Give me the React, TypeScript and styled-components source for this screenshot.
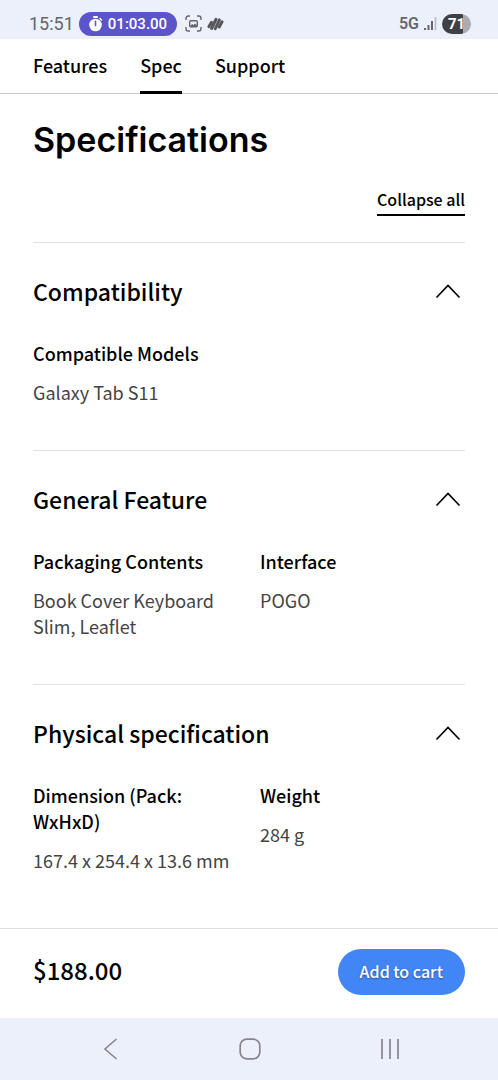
import React, { useState } from "react";
import styled, { createGlobalStyle } from "styled-components";

const GlobalStyle = createGlobalStyle`
  *, *::before, *::after { box-sizing: border-box; }
  body {
    margin: 0;
    background: #fff;
    color: #000;
    font-family: "Noto Sans CJK KR", "Noto Sans", sans-serif;
  }
  button { font-family: inherit; color: inherit; cursor: pointer; }
  h1, h2, dl, dt, dd, p { margin: 0; }
`;

const Page = styled.div`
  display: flex;
  flex-direction: column;
  min-height: 100vh;
`;

const StatusBar = styled.div`
  display: flex;
  align-items: center;
  justify-content: space-between;
  height: 39px;
  padding: 8px 27px 0 29px;
  background: #ebf0fb;
  color: #65666d;
  font-family: Roboto, sans-serif;
`;

const StatusGroup = styled.div<{ $gap: number }>`
  display: flex;
  align-items: center;
  gap: ${(p) => p.$gap}px;
`;

const Clock = styled.span`
  font-size: 18px;
  line-height: 24px;
`;

const TimerPill = styled.span`
  display: flex;
  align-items: center;
  gap: 6px;
  height: 24px;
  margin-right: 3px;
  padding: 0 10px;
  border-radius: 12px;
  background: #5c55c9;
  color: #fff;
  font-size: 15px;
  font-weight: 500;
`;

const Network = styled.span`
  font-size: 16px;
  font-weight: 600;
`;

const Battery = styled.span`
  display: flex;
  align-items: center;
  justify-content: center;
  width: 29px;
  height: 20px;
  border-radius: 10px;
  background: linear-gradient(90deg, #3f4045 71%, #aaacb4 71%);
  color: #fff;
  font-size: 15px;
  font-weight: 700;
`;

const Tabs = styled.nav`
  display: flex;
  gap: 33px;
  height: 55px;
  padding: 0 33px;
  border-bottom: 1px solid #ccc;
`;

const Tab = styled.a<{ $active?: boolean }>`
  height: 55px;
  padding-top: 12px;
  border-bottom: 3px solid ${(p) => (p.$active ? "#000" : "transparent")};
  color: #000;
  font-size: 18px;
  font-weight: 500;
  line-height: 28px;
  text-decoration: none;
`;

const Content = styled.main`
  flex: 1;
  padding: 24px 33px 8px;
`;

const Title = styled.h1`
  font-family: Inter, sans-serif;
  font-size: 34px;
  font-weight: 600;
  line-height: 44px;
`;

const CollapseRow = styled.div`
  display: flex;
  justify-content: flex-end;
  padding: 25px 0 26px;
`;

const CollapseButton = styled.button`
  padding: 0 0 3px;
  border: 0;
  border-bottom: 2px solid #000;
  background: none;
  font-size: 16px;
  font-weight: 500;
  line-height: 24px;
`;

const Section = styled.section`
  padding: 32px 0 45px;
  border-top: 1px solid #e2e2e2;
`;

const SectionHeading = styled.h2`
  font-size: 23px;
  font-weight: 500;
  line-height: 32px;
`;

const SectionToggle = styled.button`
  display: flex;
  align-items: center;
  justify-content: space-between;
  width: 100%;
  padding: 0 4px 0 0;
  border: 0;
  background: none;
  font: inherit;
`;

const SpecList = styled.dl`
  display: grid;
  grid-template-columns: 1fr 1fr;
  column-gap: 22px;
  padding-top: 33px;
`;

const SpecName = styled.dt`
  font-size: 18px;
  font-weight: 500;
  line-height: 26px;
`;

const SpecValue = styled.dd`
  padding-top: 13px;
  color: #444;
  font-size: 18px;
  font-weight: 400;
  line-height: 26px;
`;

const BuyBar = styled.footer`
  display: flex;
  align-items: center;
  justify-content: space-between;
  height: 90px;
  padding: 0 33px 4px;
  border-top: 1px solid #ddd;
`;

const Price = styled.p`
  padding-bottom: 4px;
  font-size: 24px;
  font-weight: 500;
  line-height: 32px;
`;

const CartButton = styled.button`
  height: 46px;
  padding: 0 22px 2px;
  border: 0;
  border-radius: 23px;
  background: #4285f4;
  color: #fff;
  font-size: 16px;
  font-weight: 500;
  line-height: 24px;
  text-shadow: 0 1px 2px rgba(0, 0, 0, 0.35);
`;

const SystemNav = styled.div`
  display: flex;
  align-items: center;
  justify-content: space-between;
  height: 62px;
  padding: 0 94px 0 96px;
  background: #ebf0fb;
`;

const SystemButton = styled.button`
  display: flex;
  padding: 0;
  border: 0;
  background: none;
`;

const StopwatchIcon = () => (
  <svg width="13" height="16" viewBox="0 0 13 16" aria-hidden="true">
    <rect x="4" y="0" width="5" height="2" rx="1" fill="#fff" />
    <path d="M11 2.6l1.4 1.4" stroke="#fff" strokeWidth="1.4" strokeLinecap="round" />
    <circle cx="6.5" cy="9" r="6.3" fill="#fff" />
    <path d="M6.5 5.4v4.2" stroke="#5c55c9" strokeWidth="1.6" strokeLinecap="round" />
  </svg>
);

const CaptureIcon = () => (
  <svg width="17" height="17" viewBox="0 0 17 17" fill="none" stroke="#65666d" strokeWidth="1.4" aria-hidden="true">
    <path d="M1 5V3.2A2.2 2.2 0 0 1 3.2 1H5M12 1h1.8A2.2 2.2 0 0 1 16 3.2V5M16 12v1.8a2.2 2.2 0 0 1-2.2 2.2H12M5 16H3.2A2.2 2.2 0 0 1 1 13.8V12" />
    <rect x="4.7" y="5.7" width="7.6" height="6" rx="1" />
    <path d="M5 11l2.2-2 1.3 1 1.6-1.6 2 2.2v1H5z" fill="#65666d" stroke="none" />
  </svg>
);

const StripesIcon = () => (
  <svg width="17" height="14" viewBox="0 0 17 14" fill="none" stroke="#55565c" strokeLinecap="round" aria-hidden="true">
    <path d="M2 9.6L4.4 5.4" strokeWidth="3" />
    <path d="M4.6 11.4L9 2.4" strokeWidth="3.2" />
    <path d="M8.2 11.8L12.4 2.8" strokeWidth="2.8" />
    <path d="M12.2 10L15 4.8" strokeWidth="3" />
  </svg>
);

const SignalIcon = () => (
  <svg width="13" height="13" viewBox="0 0 13 13" fill="#65666d" aria-hidden="true">
    <rect x="0" y="11" width="2" height="2" />
    <rect x="3.5" y="8" width="2" height="5" />
    <rect x="7" y="4" width="2" height="9" />
    <rect x="10.7" y="0" width="1.6" height="13" fill="#b8bac3" />
  </svg>
);

const Chevron = ({ open }: { open: boolean }) => (
  <svg width="26" height="16" viewBox="0 0 26 16" fill="none" stroke="#000" strokeWidth="1.7" aria-hidden="true">
    <path d={open ? "M1.5 14.5L13 2.5L24.5 14.5" : "M1.5 1.5L13 13.5L24.5 1.5"} />
  </svg>
);

const BackIcon = () => (
  <svg width="28" height="22" viewBox="0 0 28 22" fill="none" stroke="#85868c" strokeWidth="1.6" aria-hidden="true">
    <path d="M20.5 1L9 11l11.5 10" />
  </svg>
);

const HomeIcon = () => (
  <svg width="22" height="22" viewBox="0 0 22 22" fill="none" stroke="#85868c" strokeWidth="1.7" aria-hidden="true">
    <rect x="1.2" y="1.2" width="19.6" height="19.6" rx="6.5" />
  </svg>
);

const RecentsIcon = () => (
  <svg width="28" height="20" viewBox="0 0 28 20" fill="none" stroke="#85868c" strokeWidth="1.7" aria-hidden="true">
    <path d="M6 0v20M14 0v20M22 0v20" />
  </svg>
);

const groups = [
  {
    title: "Compatibility",
    specs: [{ name: "Compatible Models", value: "Galaxy Tab S11" }],
  },
  {
    title: "General Feature",
    specs: [
      { name: "Packaging Contents", value: "Book Cover Keyboard Slim, Leaflet" },
      { name: "Interface", value: "POGO" },
    ],
  },
  {
    title: "Physical specification",
    specs: [
      { name: "Dimension (Pack: WxHxD)", value: "167.4 x 254.4 x 13.6 mm" },
      { name: "Weight", value: "284 g" },
    ],
  },
];

export default function App() {
  const [open, setOpen] = useState<boolean[]>(groups.map(() => true));
  const anyOpen = open.some(Boolean);

  return (
    <>
      <GlobalStyle />
      <Page>
        <StatusBar>
          <StatusGroup $gap={5}>
            <Clock>15:51</Clock>
            <TimerPill>
              <StopwatchIcon />
              01:03.00
            </TimerPill>
            <StatusGroup $gap={5}>
              <CaptureIcon />
              <StripesIcon />
            </StatusGroup>
          </StatusGroup>
          <StatusGroup $gap={5}>
            <Network>5G</Network>
            <SignalIcon />
            <Battery>71</Battery>
          </StatusGroup>
        </StatusBar>

        <Tabs aria-label="Product">
          <Tab href="#features">Features</Tab>
          <Tab href="#spec" $active aria-current="page">Spec</Tab>
          <Tab href="#support">Support</Tab>
        </Tabs>

        <Content id="spec">
          <Title>Specifications</Title>
          <CollapseRow>
            <CollapseButton type="button" onClick={() => setOpen(groups.map(() => !anyOpen))}>
              {anyOpen ? "Collapse all" : "Expand all"}
            </CollapseButton>
          </CollapseRow>
          {groups.map((group, i) => (
            <Section key={group.title}>
              <SectionHeading>
                <SectionToggle
                  type="button"
                  aria-expanded={open[i]}
                  onClick={() => setOpen(open.map((v, j) => (j === i ? !v : v)))}
                >
                  {group.title}
                  <Chevron open={open[i]} />
                </SectionToggle>
              </SectionHeading>
              {open[i] && (
                <SpecList>
                  {group.specs.map((spec) => (
                    <div key={spec.name}>
                      <SpecName>{spec.name}</SpecName>
                      <SpecValue>{spec.value}</SpecValue>
                    </div>
                  ))}
                </SpecList>
              )}
            </Section>
          ))}
        </Content>

        <BuyBar>
          <Price>$188.00</Price>
          <CartButton type="button">Add to cart</CartButton>
        </BuyBar>

        <SystemNav>
          <SystemButton type="button" aria-label="Back"><BackIcon /></SystemButton>
          <SystemButton type="button" aria-label="Home"><HomeIcon /></SystemButton>
          <SystemButton type="button" aria-label="Recent apps"><RecentsIcon /></SystemButton>
        </SystemNav>
      </Page>
    </>
  );
}
